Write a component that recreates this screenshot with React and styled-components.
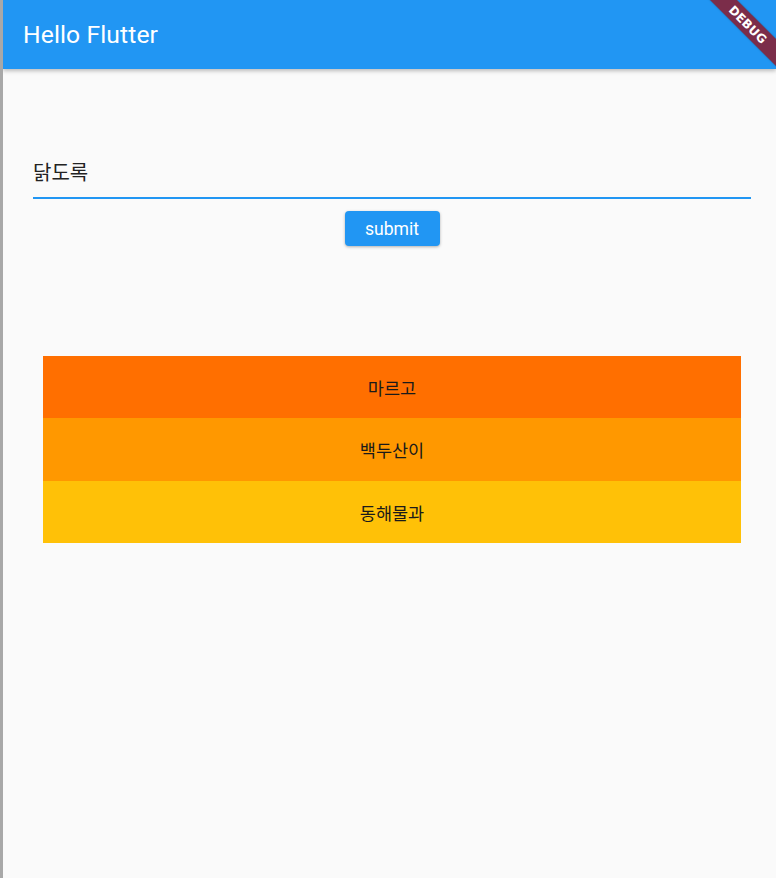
import React from "react";
import styled, { createGlobalStyle } from "styled-components";

const Global = createGlobalStyle`
  html, body { margin: 0; padding: 0; background: #fafafa; }
  body { font-family: Roboto, "Noto Sans CJK KR", sans-serif; }
  * { box-sizing: border-box; }
`;

const Frame = styled.div`
  position: relative;
  width: 776px;
  height: 878px;
  overflow: hidden;
  background: #fafafa;
  border-left: 3px solid #a8a8a8;
  display: flex;
  flex-direction: column;
`;

const AppBar = styled.header`
  height: 69px;
  flex: none;
  background: #2196f3;
  display: flex;
  align-items: center;
  padding-left: 20px;
  box-shadow: 0 2px 4px rgba(0, 0, 0, 0.25);
  position: relative;
  z-index: 1;
`;

const Title = styled.h1`
  margin: 0;
  font-family: Roboto, sans-serif;
  font-weight: 400;
  font-size: 24.7px;
  color: #fff;
  letter-spacing: 0.1px;
`;

const Banner = styled.div`
  position: absolute;
  top: 15px;
  right: -28px;
  width: 112px;
  height: 19px;
  background: #7b2d4a;
  transform: rotate(45deg);
  display: flex;
  align-items: center;
  justify-content: center;
  color: #fff;
  font-family: "DejaVu Sans", sans-serif;
  font-weight: 700;
  font-size: 12px;
  letter-spacing: 0.2px;
  z-index: 2;
  box-shadow: 0 0 2px rgba(0,0,0,0.3);
`;

const Body = styled.main`
  display: flex;
  flex-direction: column;
  align-items: stretch;
  padding: 90px 25px 0 30px;
`;

const Field = styled.input`
  display: block;
  width: 100%;
  height: 40px;
  border: none;
  border-bottom: 2px solid #2196f3;
  background: transparent;
  outline: none;
  padding: 0 0 14px 0;
  font-family: "Noto Sans CJK KR", sans-serif;
  font-size: 20px;
  line-height: 24px;
  color: #222;
`;

const Submit = styled.button`
  align-self: center;
  margin-top: 12px;
  width: 95px;
  height: 35px;
  border: none;
  border-radius: 4px;
  background: #2196f3;
  color: #fff;
  font-family: Roboto, sans-serif;
  font-size: 17.6px;
  box-shadow: 0 1px 3px rgba(0, 0, 0, 0.3);
  cursor: pointer;
`;

const List = styled.div`
  margin: 110px 10px 0 10px;
  display: flex;
  flex-direction: column;
`;

const Row = styled.div`
  height: ${(p) => p.$h}px;
  background: ${(p) => p.$bg};
  display: flex;
  align-items: center;
  justify-content: center;
  font-family: "Noto Sans CJK KR", sans-serif;
  font-size: 17.5px;
  color: #1a1a1a;
`;

const rows = [
  { text: "마르고", bg: "#ff6f00", h: 62 },
  { text: "백두산이", bg: "#ff9800", h: 63 },
  { text: "동해물과", bg: "#ffc107", h: 62 },
];

export default function App() {
  return (
    <>
      <Global />
      <Frame>
        <AppBar>
          <Title>Hello Flutter</Title>
        </AppBar>
        <Banner>DEBUG</Banner>
        <Body>
          <Field defaultValue="닭도록" />
          <Submit>submit</Submit>
          <List>
            {rows.map((r) => (
              <Row key={r.text} $bg={r.bg} $h={r.h}>
                {r.text}
              </Row>
            ))}
          </List>
        </Body>
      </Frame>
    </>
  );
}
